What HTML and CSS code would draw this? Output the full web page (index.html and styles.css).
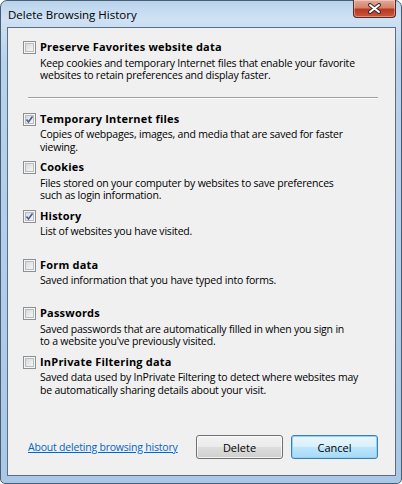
FILE: index.html
```html
<!DOCTYPE html>
<html lang="en">
<head>
    <meta charset="UTF-8">
    <title>Delete Browsing History</title>
    <link rel="stylesheet" href="styles.css">
</head>
<body>
    <div class="window">
        <div class="titlebar">
            <span class="title">Delete Browsing History</span>
            <button class="close" aria-label="Close">
                <svg width="15" height="11" viewBox="0 0 15 11">
                    <path d="M3 2 L12 9 M12 2 L3 9" stroke="#3a2a2a" stroke-width="4" stroke-linecap="round"/>
                    <path d="M3 2 L12 9 M12 2 L3 9" stroke="#ffffff" stroke-width="2" stroke-linecap="round"/>
                </svg>
            </button>
        </div>

        <div class="panel">
            <div class="option">
                <span class="check"></span>
                <div class="option-text">
                    <div class="option-label">Preserve Favorites website data</div>
                    <div class="option-desc">Keep cookies and temporary Internet files that enable your favorite<br>websites to retain preferences and display faster.</div>
                </div>
            </div>

            <hr class="divider">

            <div class="option">
                <span class="check checked">
                    <svg width="9" height="9" viewBox="0 0 9 9"><path d="M1.5 4.5 L3.5 7 L7.5 1.5" fill="none" stroke="#4a5c94" stroke-width="1.6"/></svg>
                </span>
                <div class="option-text">
                    <div class="option-label">Temporary Internet files</div>
                    <div class="option-desc">Copies of webpages, images, and media that are saved for faster<br>viewing.</div>
                </div>
            </div>

            <div class="option">
                <span class="check"></span>
                <div class="option-text">
                    <div class="option-label">Cookies</div>
                    <div class="option-desc">Files stored on your computer by websites to save preferences<br>such as login information.</div>
                </div>
            </div>

            <div class="option">
                <span class="check checked">
                    <svg width="9" height="9" viewBox="0 0 9 9"><path d="M1.5 4.5 L3.5 7 L7.5 1.5" fill="none" stroke="#4a5c94" stroke-width="1.6"/></svg>
                </span>
                <div class="option-text">
                    <div class="option-label">History</div>
                    <div class="option-desc">List of websites you have visited.</div>
                </div>
            </div>

            <div class="option">
                <span class="check"></span>
                <div class="option-text">
                    <div class="option-label">Form data</div>
                    <div class="option-desc">Saved information that you have typed into forms.</div>
                </div>
            </div>

            <div class="option">
                <span class="check"></span>
                <div class="option-text">
                    <div class="option-label">Passwords</div>
                    <div class="option-desc">Saved passwords that are automatically filled in when you sign in<br>to a website you've previously visited.</div>
                </div>
            </div>

            <div class="option">
                <span class="check"></span>
                <div class="option-text">
                    <div class="option-label">InPrivate Filtering data</div>
                    <div class="option-desc">Saved data used by InPrivate Filtering to detect where websites may<br>be automatically sharing details about your visit.</div>
                </div>
            </div>

            <div class="footer">
                <a href="#" class="help-link">About deleting browsing history</a>
                <button class="btn">Delete</button>
                <button class="btn btn-default">Cancel</button>
            </div>
        </div>
    </div>
</body>
</html>
```

FILE: styles.css
```css
body {
    margin: 0;
    font-family: "Open Sans", "Noto Sans", sans-serif;
    font-size: 10.5px;
    color: #000;
    background: #ffffff;
}

.window {
    width: 402px;
    height: 484px;
    box-sizing: border-box;
    display: flex;
    flex-direction: column;
    border: 1px solid #4b5d72;
    border-radius: 7px 7px 5px 5px;
    background: linear-gradient(180deg, #b9d3ec 0%, #cfe2f4 18px, #b7d2ec 60px, #a9c8e7 100%);
}

/* title bar */
.titlebar {
    height: 26px;
    display: flex;
    align-items: flex-start;
    padding-left: 7px;
}

.title {
    flex: 1;
    font-size: 11.5px;
    line-height: 12px;
    padding-top: 8px;
}

.close {
    width: 43px;
    height: 18px;
    margin: -1px 5px 0 0;
    padding: 0;
    display: flex;
    align-items: center;
    justify-content: center;
    border: 1px solid #5a2a20;
    border-top: none;
    border-radius: 0 0 4px 4px;
    background: linear-gradient(180deg, #e3a99a 0%, #d5836d 45%, #b9391f 55%, #c9583c 100%);
    box-shadow: inset 0 0 0 1px rgba(255, 255, 255, 0.35);
}

/* main panel */
.panel {
    flex: 1;
    display: flex;
    flex-direction: column;
    margin: 0 5px 7px 6px;
    padding-top: 13px;
    border: 1px solid #5e6c7c;
    background: #f0f0f0;
}

.option {
    height: 48.66px;
    display: grid;
    grid-template-columns: 13px 1fr;
    column-gap: 4px;
    align-items: start;
    padding-left: 15px;
}

.check {
    width: 13px;
    height: 13px;
    box-sizing: border-box;
    display: flex;
    align-items: center;
    justify-content: center;
    border: 1px solid #8e8f8f;
    background: linear-gradient(135deg, #cfd1d4 0%, #e9eaeb 55%, #fbfbfb 100%);
    box-shadow: inset 0 0 0 1px #f6f6f6, inset 0 0 0 2px #b9bcc0;
}

.option-label {
    font-size: 11px;
    font-weight: bold;
    letter-spacing: 0.2px;
    line-height: 13px;
    margin-top: -1px;
}

.option-desc {
    letter-spacing: -0.2px;
    line-height: 12.5px;
    margin-top: 3.5px;
}

.divider {
    margin: 7px 17px 14px 20px;
    border: none;
    border-top: 1px solid #a0a0a0;
    border-bottom: 1px solid #ffffff;
}

/* bottom row */
.footer {
    margin-top: auto;
    display: flex;
    align-items: center;
    gap: 8px;
    padding: 0 17px 16px 20px;
}

.help-link {
    margin-right: auto;
    white-space: nowrap;
    letter-spacing: -0.2px;
    color: #0066cc;
    text-decoration: underline;
}

.btn {
    width: 87px;
    height: 24px;
    font-family: inherit;
    font-size: 11px;
    color: #000;
    border: 1px solid #707070;
    border-radius: 3px;
    background: linear-gradient(180deg, #f2f2f2 0%, #ebebeb 50%, #dddddd 50%, #cfcfcf 100%);
    box-shadow: inset 0 0 0 1px rgba(255, 255, 255, 0.7);
}

.btn-default {
    border-color: #3c7fb1;
    background: linear-gradient(180deg, #eaf6fd 0%, #d9f0fc 50%, #bee6fd 50%, #a7d9f5 100%);
    box-shadow: inset 0 0 0 1px #8fd3f5;
}
```
